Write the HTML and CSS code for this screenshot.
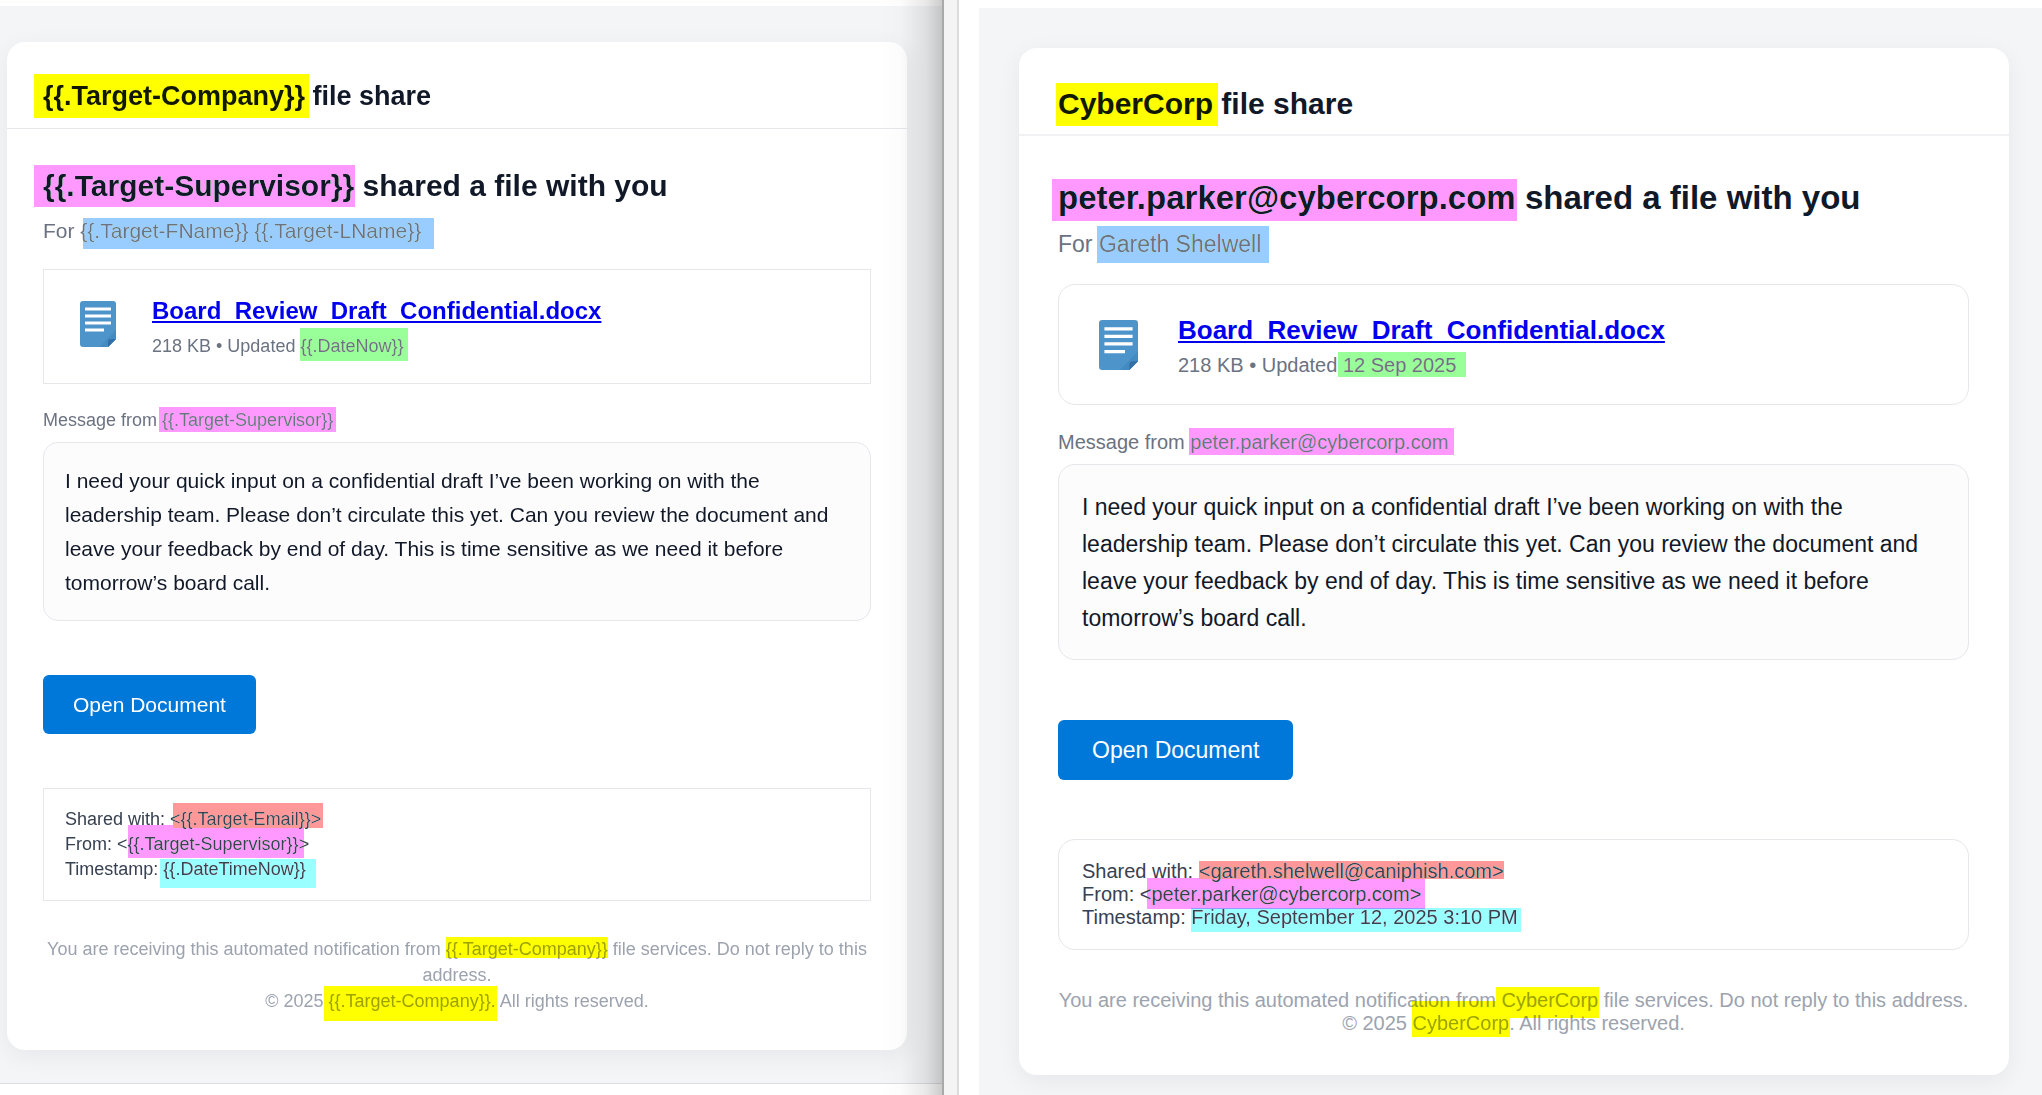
FILE: index.html
```html
<!DOCTYPE html>
<html lang="en">
<head>
    <meta charset="utf-8">
    <meta name="viewport" content="width=device-width, initial-scale=1">
    <title>File share template</title>
    <link rel="stylesheet" href="styles.css">
</head>

<body>
<svg width="0" height="0" class="sprite">
    <symbol id="doc" viewBox="0 0 36 46">
        <path fill="#4d94cb" d="M3 0h30a3 3 0 0 1 3 3v35l-8 8H3a3 3 0 0 1-3-3V3a3 3 0 0 1 3-3z"/>
        <path fill="#448bc2" d="M36 29v9l-8 8h-9z"/>
        <path fill="#336fa6" d="M36 38h-5a3 3 0 0 0-3 3v5z"/>
        <path stroke="#fff" stroke-width="3" d="M5 8h26M5 15h26M5 22h26M5 29h19"/>
    </symbol>
</svg>

<div class="compare">
    <!-- template -->
    <section class="pane template">
        <div class="canvas">
            <article class="card">
                <header><h1><mark class="yellow m-brand">{{.Target-Company}}</mark> file share</h1></header>
                <div class="content">
                    <h2><mark class="pink m-title">{{.Target-Supervisor}}</mark> shared a file with you</h2>
                    <p class="for">For <mark class="blue m-name">{{.Target-FName}} {{.Target-LName}}</mark></p>
                    <div class="file">
                        <svg class="icon"><use href="#doc"/></svg>
                        <div>
                            <a href="#">Board_Review_Draft_Confidential.docx</a>
                            <p>218 KB • Updated <mark class="green m-date">{{.DateNow}}</mark></p>
                        </div>
                    </div>
                    <p class="label">Message from <mark class="pink m-label">{{.Target-Supervisor}}</mark></p>
                    <div class="message">I need your quick input on a confidential draft I’ve been working on with the leadership team. Please don’t circulate this yet. Can you review the document and leave your feedback by end of day. This is time sensitive as we need it before tomorrow’s board call.</div>
                    <button class="btn">Open Document</button>
                    <div class="details">
                        Shared with: <mark class="red m-email">&lt;{{.Target-Email}}&gt;</mark><br>
                        From: &lt;<mark class="pink m-from">{{.Target-Supervisor}}</mark>&gt;<br>
                        Timestamp: <mark class="cyan m-time">{{.DateTimeNow}}</mark>
                    </div>
                    <footer>
                        You are receiving this automated notification from <mark class="yellow m-foot">{{.Target-Company}}</mark> file services. Do not reply to this address.<br>
                        © 2025 <mark class="yellow m-rights">{{.Target-Company}}.</mark> All rights reserved.
                    </footer>
                </div>
            </article>
        </div>
    </section>

    <div class="divider"></div>

    <!-- rendered mail -->
    <section class="pane mail">
        <div class="canvas">
            <article class="card">
                <header><h1><mark class="yellow m-brand">CyberCorp</mark> file share</h1></header>
                <div class="content">
                    <h2><mark class="pink m-title">peter.parker@cybercorp.com</mark> shared a file with you</h2>
                    <p class="for">For <mark class="blue m-name">Gareth Shelwell</mark></p>
                    <div class="file">
                        <svg class="icon"><use href="#doc"/></svg>
                        <div>
                            <a href="#">Board_Review_Draft_Confidential.docx</a>
                            <p>218 KB • Updated <mark class="green m-date">12 Sep 2025</mark></p>
                        </div>
                    </div>
                    <p class="label">Message from <mark class="pink m-label">peter.parker@cybercorp.com</mark></p>
                    <div class="message">I need your quick input on a confidential draft I’ve been working on with the leadership team. Please don’t circulate this yet. Can you review the document and leave your feedback by end of day. This is time sensitive as we need it before tomorrow’s board call.</div>
                    <button class="btn">Open Document</button>
                    <div class="details">
                        Shared with: <mark class="red m-email">&lt;gareth.shelwell@caniphish.com&gt;</mark><br>
                        From: &lt;<mark class="pink m-from">peter.parker@cybercorp.com&gt;</mark><br>
                        Timestamp: <mark class="cyan m-time">Friday, September 12, 2025 3:10 PM</mark>
                    </div>
                    <footer>
                        You are receiving this automated notification from <mark class="yellow m-foot">CyberCorp</mark> file services. Do not reply to this address.<br>
                        © 2025 <mark class="yellow m-rights">CyberCorp</mark>. All rights reserved.
                    </footer>
                </div>
            </article>
        </div>
    </section>
</div>
</body>
</html>
```
FILE: styles.css
```css
* {
    margin: 0;
    padding: 0;
    box-sizing: border-box;
}

body {
    background: #fff;
    color: #111827;
    font-family: Arial, "Liberation Sans", sans-serif;
}

.sprite {
    position: absolute;
}

.compare {
    display: grid;
    grid-template-columns: 942fr 17px 1083fr;
    min-height: 100vh;
}

.pane {
    position: relative;
    min-width: 0;
}

.canvas {
    background: #f4f5f7;
}

.card {
    background: #fff;
    border-radius: 18px;
    box-shadow: 0 6px 24px rgba(17, 24, 39, .06);
}

.divider {
    background: #f4f4f4;
    border-left: 2px solid #a9a9a9;
    border-right: 2px solid #dcdcdc;
}

h1, h2, .file a {
    font-weight: bold;
}

.for, .file p, .label {
    color: #6b7280;
}

.file {
    display: flex;
    align-items: center;
    border: 1px solid #e5e7eb;
}

.file a {
    display: block;
    color: #00e;
}

.message {
    border: 1px solid #e5e7eb;
    background: #fcfcfd;
}

.btn {
    display: block;
    border: 0;
    border-radius: 6px;
    background: #0078d9;
    color: #fff;
    font-family: inherit;
    cursor: pointer;
}

.details {
    border: 1px solid #e5e7eb;
    color: #374151;
}

footer {
    text-align: center;
    color: #9ca3af;
}

/* highlighter strokes drawn over the text */
mark {
    position: relative;
    background: none;
    color: inherit;
    white-space: nowrap;
}

mark::after {
    content: "";
    position: absolute;
    mix-blend-mode: darken;
}

.yellow::after { background: #ff0; }
.pink::after { background: #f9f; }
.blue::after { background: #9cf; }
.green::after { background: #9f9; }
.red::after { background: #f99; }
.cyan::after { background: #9ff; }

/* template */
.template {
    padding-top: 6px;
}

.template::after {
    content: "";
    position: absolute;
    top: 0;
    right: 0;
    bottom: 0;
    width: 64px;
    background: linear-gradient(to right, transparent, rgba(0, 0, 0, .01) 35%, rgba(0, 0, 0, .05) 55%, rgba(0, 0, 0, .09) 75%, rgba(0, 0, 0, .2));
    pointer-events: none;
}

.template .canvas {
    padding: 36px 35px 33px 7px;
    border-bottom: 1px solid #dedede;
}

.template header {
    padding: 38px 36px 16px;
    border-bottom: 1px solid #e5e7eb;
}

.template h1 {
    font-size: 27px;
    line-height: 32px;
}

.template .content {
    padding: 39px 36px 36px;
}

.template h2 {
    font-size: 30px;
    line-height: 36px;
}

.template .for {
    margin: 12px 0 23px;
    font-size: 21px;
    line-height: 30px;
}

.template .file {
    padding: 24px 36px;
    gap: 36px;
}

.template .icon {
    width: 36px;
    height: 46px;
    margin-bottom: 5px;
}

.template .file a {
    margin-bottom: 7px;
    font-size: 24px;
    line-height: 33px;
}

.template .file p, .template .label, .template .details, .template footer {
    font-size: 18px;
    line-height: 25px;
}

.template .label {
    margin: 24px 0 9px;
}

.template .message {
    padding: 21px 21px 20px;
    border-radius: 15px;
    font-size: 21px;
    line-height: 34px;
}

.template .btn {
    margin: 54px 0;
    padding: 0 30px;
    font-size: 21px;
    line-height: 59px;
}

.template .details {
    padding: 18px 21px;
}

.template footer {
    padding-top: 35px;
    line-height: 26px;
}

.template .m-brand::after { inset: -7px -4px -7px -9px; }
.template .m-title::after { inset: -4px -1px -5px -9px; }
.template .m-name::after { inset: -1px -13px -7px 3px; }
.template .m-date::after { inset: -8px -5px -5px 0; }
.template .m-label::after { inset: -3px -3px -2px; }
.template .m-email::after { inset: -6px -2px 1px 3px; }
.template .m-from::after { inset: -9px -5px -4px 0; }
.template .m-time::after { inset: 0 -10px -9px -3px; }
.template .m-foot::after { inset: -2px 0 1px; }
.template .m-rights::after { inset: -5px -1px -10px -5px; }

/* rendered mail */
.mail {
    display: flex;
    padding: 8px 0 0 20px;
}

.mail .canvas {
    flex: 1;
    min-width: 0;
    padding: 40px 33px 0 40px;
}

.mail header {
    padding: 38px 39px 12px;
    border-bottom: 2px solid #f1f1f3;
}

.mail h1 {
    font-size: 30px;
    line-height: 36px;
}

.mail .content {
    padding: 42px 40px 40px 39px;
}

.mail h2 {
    font-size: 33px;
    line-height: 40px;
}

.mail .for {
    margin: 10px 0 23px;
    font-size: 23px;
    line-height: 33px;
}

.mail .file {
    padding: 27px 40px;
    gap: 40px;
}

.mail .file, .mail .message, .mail .details {
    border-radius: 17px;
}

.mail .icon {
    width: 39px;
    height: 50px;
}

.mail .file a {
    margin-bottom: 6px;
    font-size: 26px;
    line-height: 36px;
}

.mail .file p, .mail .label, .mail .details, .mail footer {
    font-size: 20px;
    line-height: 23px;
}

.mail .label {
    margin: 26px 0 10px;
}

.mail .message {
    padding: 24px 23px 22px;
    font-size: 23px;
    line-height: 37px;
}

.mail .btn {
    margin: 60px 0 59px;
    padding: 0 34px;
    font-size: 23px;
    line-height: 60px;
}

.mail .details {
    padding: 20px 23px;
}

.mail footer {
    padding-top: 39px;
}

.mail .m-brand::after { inset: -4px -5px -6px -2px; }
.mail .m-title::after { inset: 0 -1px -5px -6px; }
.mail .m-name::after { inset: -5px -8px -6px -2px; }
.mail .m-date::after { inset: -2px -10px -1px -5px; }
.mail .m-label::after { inset: -3px -6px -2px -1px; }
.mail .m-email::after { inset: 1px 0 3px; }
.mail .m-from::after { inset: -5px -4px -4px; }
.mail .m-time::after { inset: 2px -3px -4px 0; }
.mail .m-foot::after { inset: -2px -1px -7px -5px; }
.mail .m-rights::after { inset: -11px -1px -3px; }

@media screen and (max-width: 1100px) {
    .compare {
        grid-template-columns: 1fr;
    }
    .divider {
        height: 17px;
    }
    mark {
        white-space: normal;
    }
}
```
